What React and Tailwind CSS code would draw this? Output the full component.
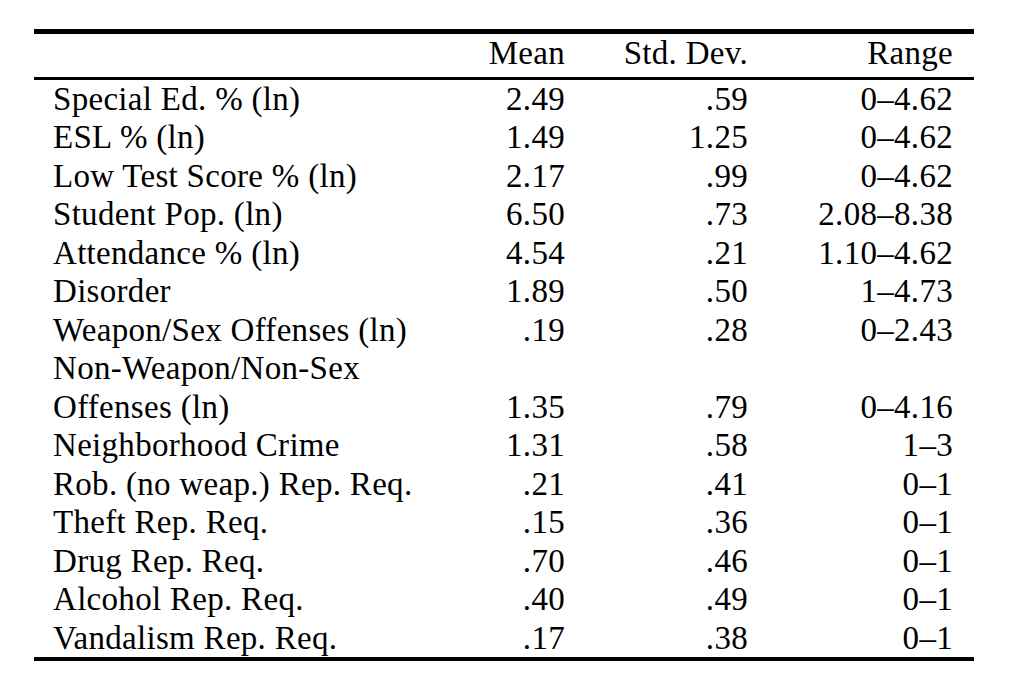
import React from 'react'

const rows = [
  ['Special Ed. % (ln)', '2.49', '.59', '0–4.62'],
  ['ESL % (ln)', '1.49', '1.25', '0–4.62'],
  ['Low Test Score % (ln)', '2.17', '.99', '0–4.62'],
  ['Student Pop. (ln)', '6.50', '.73', '2.08–8.38'],
  ['Attendance % (ln)', '4.54', '.21', '1.10–4.62'],
  ['Disorder', '1.89', '.50', '1–4.73'],
  ['Weapon/Sex Offenses (ln)', '.19', '.28', '0–2.43'],
  ['Non-Weapon/Non-Sex', '', '', ''],
  ['Offenses (ln)', '1.35', '.79', '0–4.16'],
  ['Neighborhood Crime', '1.31', '.58', '1–3'],
  ['Rob. (no weap.) Rep. Req.', '.21', '.41', '0–1'],
  ['Theft Rep. Req.', '.15', '.36', '0–1'],
  ['Drug Rep. Req.', '.70', '.46', '0–1'],
  ['Alcohol Rep. Req.', '.40', '.49', '0–1'],
  ['Vandalism Rep. Req.', '.17', '.38', '0–1'],
]

// columns: label | mean | std. dev. | range
const grid = 'grid grid-cols-[412px_143px_182px_203px]'

export default function App() {
  return (
    <div className="min-h-[684px] bg-white text-black pt-[29px] pl-[34px] font-['Liberation_Serif','Times_New_Roman',serif] text-[33px] leading-[38.5px] tracking-[0.3px]">
      <div className="w-[940px] border-t-[5px] border-b-[4px] border-black">
        {/* Header */}
        <div className={`${grid} border-b-[3px] border-black pb-[4px]`}>
          <div />
          <div className="text-right pr-[24px]">Mean</div>
          <div className="text-right pr-[23px]">Std. Dev.</div>
          <div className="text-right pr-[21px]">Range</div>
        </div>

        {/* Body */}
        {rows.map(([label, mean, sd, range], i) => (
          <div key={i} className={grid}>
            <div className="pl-[19px] whitespace-nowrap">{label}</div>
            <div className="text-right pr-[24px]">{mean}</div>
            <div className="text-right pr-[23px]">{sd}</div>
            <div className="text-right pr-[21px]">{range}</div>
          </div>
        ))}
      </div>
    </div>
  )
}
